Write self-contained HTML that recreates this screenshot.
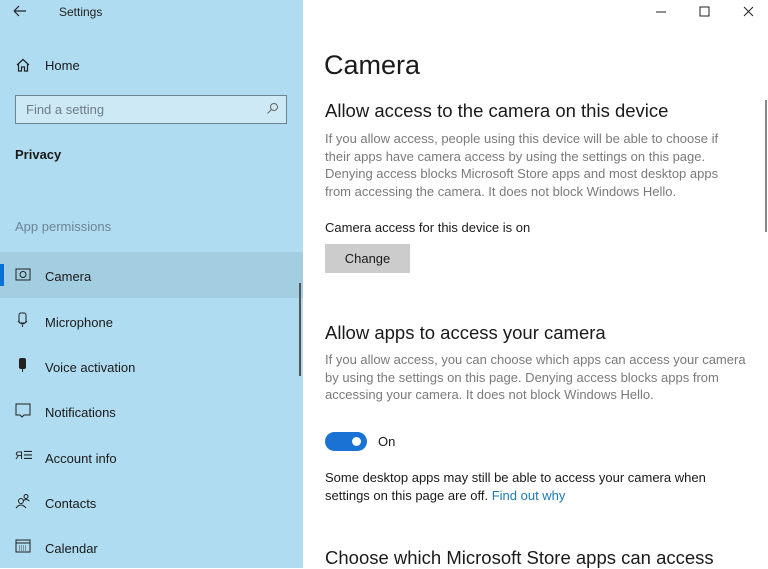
<!DOCTYPE html>
<html><head><style>
body{margin:0;width:768px;height:568px;overflow:hidden;font-family:"Liberation Sans",sans-serif;background:#fff;position:relative}
.side{position:absolute;left:0;top:0;width:303px;height:568px;background:#afdcf0}
.a{position:absolute;white-space:nowrap}
.nav{position:absolute;left:45px;font-size:13px;color:#1a1a1a}
.ic{position:absolute;left:15px}
.g{color:#7a7a7a;font-size:13px;line-height:17.5px}
h2{margin:0;font-weight:normal;font-size:18.5px;color:#1a1a1a;position:absolute;left:325px;white-space:nowrap}
</style></head><body>
<div class="side">
  <svg class="a" style="left:12px;top:4px" width="16" height="14"><path d="M2 7H14M2 7L7 2M2 7L7 12" stroke="#222" stroke-width="1.2" fill="none"/></svg>
  <div class="a" style="left:59px;top:5px;font-size:12px;color:#222">Settings</div>
  <svg class="ic" style="top:58px" width="16" height="14"><path d="M2 7L8 1.5L14 7M3.5 6V13H6.5V9H9.5V13H12.5V6" stroke="#222" stroke-width="1.2" fill="none"/></svg>
  <div class="nav" style="top:58px">Home</div>
  <div class="a" style="left:15px;top:95px;width:272px;height:29px;border:1.5px solid #6d8591;background:#cde9f5;box-sizing:border-box"></div>
  <div class="a" style="left:26px;top:102px;font-size:13px;color:#6d7c84">Find a setting</div>
  <svg class="a" style="left:266px;top:102px" width="13" height="13"><circle cx="8" cy="5" r="3.5" stroke="#666" fill="none"/><path d="M5.5 7.5L1.5 11.5" stroke="#666"/></svg>
  <div class="a" style="left:15px;top:147px;font-size:13px;font-weight:bold;color:#1a1a1a">Privacy</div>
  <div class="a" style="left:15px;top:219px;font-size:13px;color:#6d8591">App permissions</div>
  <div class="a" style="left:0;top:252px;width:303px;height:46px;background:#a3cde0"></div>
  <div class="a" style="left:0;top:264px;width:4px;height:22px;background:#0a6fd6"></div>
  <svg class="ic" style="top:268px" width="16" height="13"><rect x="1" y="1" width="14" height="11" stroke="#222" fill="none"/><circle cx="8" cy="6.5" r="3" stroke="#222" fill="none"/></svg>
  <div class="nav" style="top:269px">Camera</div>
  <div class="a" style="left:299px;top:283px;width:2px;height:93px;background:#555"></div>
  <svg class="ic" style="left:17px;top:312px" width="12" height="16"><rect x="2" y="1" width="7" height="10" rx="2" stroke="#222" fill="none"/><path d="M1 9Q5.5 15 10 9M5.5 13V15" stroke="#222" fill="none"/></svg>
  <div class="nav" style="top:315px">Microphone</div>
  <svg class="ic" style="left:17px;top:357px" width="12" height="16"><rect x="2" y="1" width="7" height="11" rx="2" fill="#222"/><path d="M5.5 12V15" stroke="#222"/></svg>
  <div class="nav" style="top:360px">Voice activation</div>
  <svg class="ic" style="top:403px" width="17" height="16"><path d="M1 1H15V12H9L7 14L5 12H1Z" stroke="#222" fill="none"/></svg>
  <div class="nav" style="top:405px">Notifications</div>
  <div class="a" style="left:15px;top:449px;font-size:11px;color:#222">Я☰</div>
  <div class="nav" style="top:451px">Account info</div>
  <svg class="ic" style="top:493px" width="17" height="16"><circle cx="6" cy="8" r="2.5" stroke="#222" fill="none"/><path d="M1 15Q6 9 11 15" stroke="#222" fill="none"/><circle cx="11" cy="3.5" r="2" stroke="#222" fill="none"/><path d="M8 8Q11 5 14.5 8" stroke="#222" fill="none"/></svg>
  <div class="nav" style="top:496px">Contacts</div>
  <svg class="ic" style="top:539px" width="17" height="15"><rect x="1" y="1" width="14" height="12" stroke="#222" fill="none"/><path d="M1 4H15" stroke="#222"/><path d="M4 7H12M4 9H12M4 11H12" stroke="#444" stroke-dasharray="1 1"/></svg>
  <div class="nav" style="top:541px">Calendar</div>
</div>
<svg class="a" style="left:655px;top:5px" width="100" height="14"><path d="M1 7H11" stroke="#222"/><rect x="45" y="2" width="9" height="9" stroke="#222" fill="none"/><path d="M89 2L98 11M98 2L89 11" stroke="#222"/></svg>
<div class="a" style="left:324px;top:50px;font-size:27px;color:#1a1a1a">Camera</div>
<h2 style="top:100px">Allow access to the camera on this device</h2>
<div class="a g" style="left:325px;top:130px">If you allow access, people using this device will be able to choose if<br>their apps have camera access by using the settings on this page.<br>Denying access blocks Microsoft Store apps and most desktop apps<br>from accessing the camera. It does not block Windows Hello.</div>
<div class="a" style="left:325px;top:220px;font-size:13px;color:#1a1a1a">Camera access for this device is on</div>
<div class="a" style="left:325px;top:244px;width:85px;height:29px;background:#cccccc;font-size:13px;color:#1a1a1a;text-align:center;line-height:29px">Change</div>
<div class="a" style="left:765px;top:100px;width:2px;height:132px;background:#888"></div>
<h2 style="top:322px">Allow apps to access your camera</h2>
<div class="a g" style="left:325px;top:351px">If you allow access, you can choose which apps can access your camera<br>by using the settings on this page. Denying access blocks apps from<br>accessing your camera. It does not block Windows Hello.</div>
<div class="a" style="left:325px;top:432px;width:42px;height:19px;border-radius:10px;background:#1a73d4"></div>
<div class="a" style="left:352px;top:437px;width:9px;height:9px;border-radius:50%;background:#fff"></div>
<div class="a" style="left:378px;top:434px;font-size:13px;color:#1a1a1a">On</div>
<div class="a" style="left:325px;top:469px;font-size:13px;line-height:17.5px;color:#1a1a1a">Some desktop apps may still be able to access your camera when<br>settings on this page are off. <span style="color:#1d7bb0">Find out why</span></div>
<h2 style="top:547px">Choose which Microsoft Store apps can access</h2>
</body></html>
